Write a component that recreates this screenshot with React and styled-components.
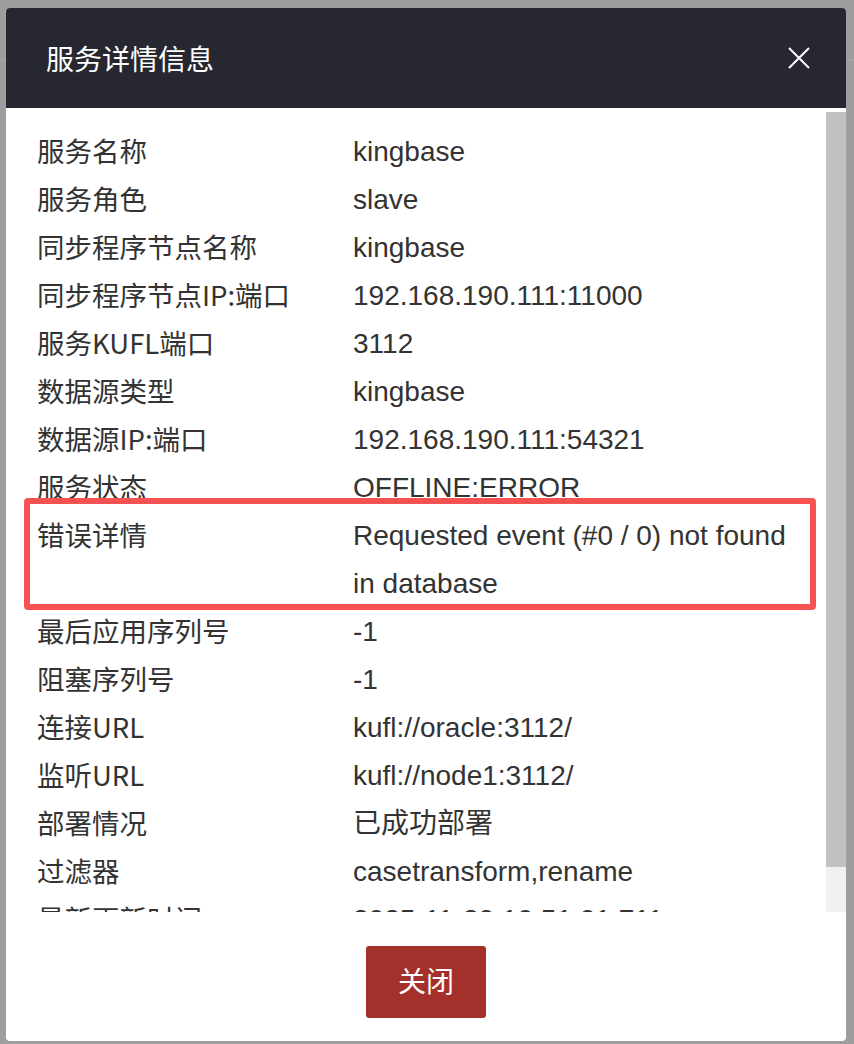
import React from "react";
import styled, { createGlobalStyle } from "styled-components";

const GlobalStyle = createGlobalStyle`
  html, body {
    margin: 0;
    padding: 0;
    width: 854px;
    height: 1044px;
    overflow: hidden;
    background: #9e9e9e;
    font-family: "Liberation Sans", "Noto Sans CJK SC", sans-serif;
  }
`;

const rows = [
  ["服务名称", "kingbase"],
  ["服务角色", "slave"],
  ["同步程序节点名称", "kingbase"],
  ["同步程序节点IP:端口", "192.168.190.111:11000"],
  ["服务KUFL端口", "3112"],
  ["数据源类型", "kingbase"],
  ["数据源IP:端口", "192.168.190.111:54321"],
  ["服务状态", "OFFLINE:ERROR"],
  ["错误详情", "Requested event (#0 / 0) not found in database", true],
  ["最后应用序列号", "-1"],
  ["阻塞序列号", "-1"],
  ["连接URL", "kufl://oracle:3112/"],
  ["监听URL", "kufl://node1:3112/"],
  ["部署情况", "已成功部署"],
  ["过滤器", "casetransform,rename"],
  ["最新更新时间", "2025-11-20 10:51:01.711"],
];

export default function App() {
  return (
    <>
      <GlobalStyle />
      <Overlay>
        <PageLine style={{ top: 60 }} />
        <Modal>
          <Header>
            <Title>服务详情信息</Title>
            <CloseButton aria-label="close">
              <svg width="22" height="22" viewBox="0 0 22 22">
                <path
                  d="M1 1 L21 21 M21 1 L1 21"
                  stroke="#fff"
                  strokeWidth="2"
                  fill="none"
                />
              </svg>
            </CloseButton>
          </Header>
          <Body>
            <Scroller>
              <Table>
                {rows.map(([label, value, marked]) => (
                  <Row key={label} $marked={marked}>
                    <Label>{label}</Label>
                    <Value>{value}</Value>
                  </Row>
                ))}
              </Table>
            </Scroller>
            <ScrollTrack>
              <ScrollThumb />
            </ScrollTrack>
          </Body>
          <Footer>
            <CloseAction>关闭</CloseAction>
          </Footer>
        </Modal>
      </Overlay>
    </>
  );
}

const Overlay = styled.div`
  position: relative;
  width: 854px;
  height: 1044px;
  padding: 8px 8px 0 6px;
  box-sizing: border-box;
  background: #9e9e9e;
`;

const PageLine = styled.span`
  position: absolute;
  left: 0;
  width: 100%;
  height: 1px;
  background: #a8a8a8;
`;

const Modal = styled.div`
  position: relative;
  width: 840px;
  height: 1033px;
  background: #fff;
  border-radius: 4px;
  overflow: hidden;
  display: flex;
  flex-direction: column;
`;

const Header = styled.div`
  height: 100px;
  flex-shrink: 0;
  background: #262730;
  display: flex;
  align-items: center;
  justify-content: space-between;
  padding: 0 36px 0 40px;
`;

const Title = styled.h2`
  margin: 0;
  color: #fff;
  font-size: 28px;
  font-weight: normal;
  font-family: "Noto Sans CJK SC", sans-serif;
`;

const CloseButton = styled.button`
  border: 0;
  padding: 0;
  background: transparent;
  display: flex;
  cursor: pointer;
`;

const Body = styled.div`
  margin-top: 4px;
  height: 800px;
  flex-shrink: 0;
  display: flex;
`;

const Scroller = styled.div`
  flex: 1;
  overflow: hidden;
  padding: 16px 0 16px 31px;
`;

const ScrollTrack = styled.div`
  width: 20px;
  flex-shrink: 0;
  background: #f1f1f1;
`;

const ScrollThumb = styled.div`
  height: 755px;
  background: #c1c1c1;
`;

const Table = styled.div`
  display: flex;
  flex-direction: column;
`;

const Row = styled.div`
  position: relative;
  display: grid;
  grid-template-columns: 316px 1fr;
  font-size: 27.5px;
  line-height: 48px;
  color: #333;

  ${(p) =>
    p.$marked &&
    `
    &::after {
      content: "";
      position: absolute;
      left: -13px;
      right: 10px;
      top: -14px;
      bottom: -2px;
      border: 6px solid #f75252;
      border-radius: 4px;
      pointer-events: none;
    }
  `}
`;

const Label = styled.div`
  font-family: "Noto Sans CJK SC", sans-serif;
  white-space: nowrap;
  position: relative;
  top: -2px;
`;

const Value = styled.div`
  font-family: "Liberation Sans", "Noto Sans CJK SC", sans-serif;
  font-size: 28px;
  padding-right: 30px;
`;

const Footer = styled.div`
  flex: 1;
  display: flex;
  justify-content: center;
  padding-top: 34px;
`;

const CloseAction = styled.button`
  width: 120px;
  height: 72px;
  border: 0;
  border-radius: 3px;
  padding: 0 0 4px;
  background: #a3302a;
  color: #fff;
  font-size: 28px;
  font-family: "Noto Sans CJK SC", sans-serif;
  cursor: pointer;
`;
